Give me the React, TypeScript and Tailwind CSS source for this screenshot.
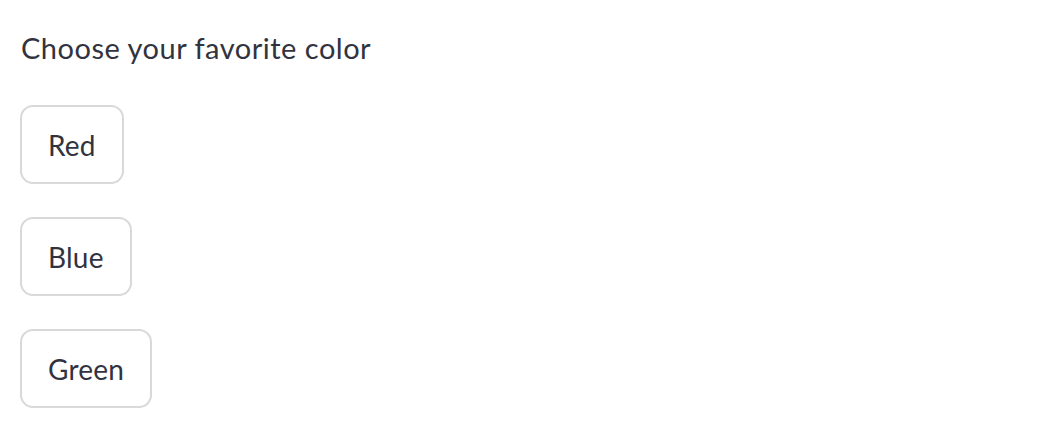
import React, { useState } from 'react';

const colors = ['Red', 'Blue', 'Green'];

export default function App() {
  const [picked, setPicked] = useState<string | null>(null);

  return (
    <div
      className="min-h-screen bg-white text-[#31333f] px-[20px] pt-[28px]"
      style={{ fontFamily: 'Lato, "Noto Sans", sans-serif' }}
    >
      <p className="text-[29px] leading-[40px] tracking-[0.5px] mb-[37px] pl-px">Choose your favorite color</p>
      <div className="flex flex-col items-start gap-[33px]">
        {colors.map((c) => (
          <button
            key={c}
            onClick={() => setPicked(c)}
            className="h-[79px] px-[26px] rounded-[13px] border-2 border-[#d9d9dc] bg-white text-[28px] leading-none tracking-[0.2px]"
            aria-pressed={picked === c}
          >
            {c}
          </button>
        ))}
      </div>
    </div>
  );
}
